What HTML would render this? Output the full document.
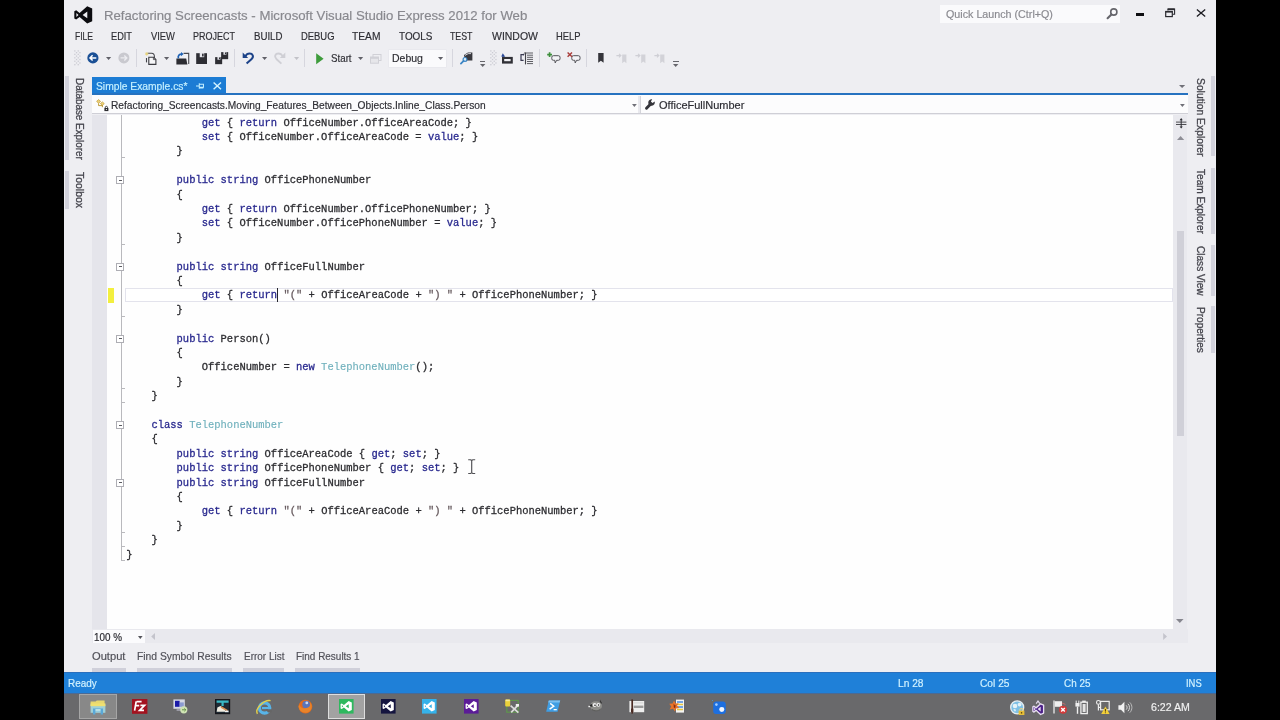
<!DOCTYPE html>
<html><head><meta charset="utf-8"><title>VS</title>
<style>
html,body{margin:0;padding:0;background:#000;}
body{width:1280px;height:720px;overflow:hidden;position:relative;font-family:"Liberation Sans",sans-serif;}
#w{position:absolute;left:64px;top:0;width:1152px;height:720px;background:#eeeef2;overflow:hidden;}
.t{position:absolute;white-space:pre;transform-origin:0 0;-webkit-text-stroke:0.18px currentColor;font-family:"Liberation Sans",sans-serif;}
.b{position:absolute;}
.c{position:absolute;white-space:pre;font-family:"Liberation Mono",monospace;font-size:10.475px;line-height:14.4px;color:#2c2c30;left:0;-webkit-text-stroke:0.28px currentColor;}
.k{color:#28288e}.y{color:#6fb0bc;-webkit-text-stroke:0.12px currentColor}.s{color:#685c60}
.v{position:absolute;writing-mode:vertical-rl;white-space:pre;-webkit-text-stroke:0.3px currentColor;font-family:"Liberation Sans",sans-serif;color:#4a4a50;}
svg{position:absolute;overflow:visible}
</style></head><body>
<div id="clip" style="position:absolute;left:64px;top:0;width:1152px;height:720px;overflow:hidden">
<div id="w" style="left:-64px;width:1280px;background:none;overflow:visible;filter:blur(0.6px)">
<div class="b" style="left:34px;top:-30px;width:1212px;height:780px;background:#eeeef2"></div>
<svg style="left:74.2px;top:6.3px" width="19" height="18" viewBox="0 0 19 18"><path d="M13.2 0.3 L18.2 2.6 L18.2 15.2 L13.2 17.6 L5.6 10.9 L2.2 13.6 L0.3 12.6 L0.3 5.2 L2.2 4.2 L5.6 6.9 Z M13.3 5.6 L8.6 8.9 L13.3 12.3 Z M2.4 6.9 L2.4 11 L4.5 8.9 Z" fill="#0c0c10" fill-rule="evenodd"/></svg>
<div class="t" style="left:103.90px;top:6.16px;font-size:13.4px;line-height:19px;transform:scaleX(0.9851);color:#88888e;">Refactoring Screencasts - Microsoft Visual Studio Express 2012 for Web</div>
<div class="b" style="left:940px;top:4.6px;width:180px;height:18.4px;background:#fafafc"></div>
<div class="t" style="left:945.50px;top:6.93px;font-size:10.6px;line-height:15px;transform:scaleX(1.0119);color:#8a8a90;">Quick Launch (Ctrl+Q)</div>
<svg style="left:1105px;top:7px" width="14" height="14" viewBox="0 0 14 14"><circle cx="8.8" cy="5" r="3.1" fill="none" stroke="#66666c" stroke-width="1.6"/><path d="M6.4 7.4 L2.6 11.2" stroke="#66666c" stroke-width="2.1" stroke-linecap="round"/></svg>
<div class="b" style="left:1135.6px;top:12.8px;width:8.6px;height:3.3px;background:#0e0e12"></div>
<svg style="left:1164.8px;top:7.8px" width="10.4" height="9.4" viewBox="0 0 10.4 9.4"><path d="M2.9 2.6 V1 H9.6 V6.2 H7.6" fill="none" stroke="#2a2a30" stroke-width="1.1"/><path d="M2.9 1.3 H9.6" stroke="#2a2a30" stroke-width="1.7"/><rect x="0.7" y="3.5" width="6.6" height="5.1" fill="none" stroke="#2a2a30" stroke-width="1.2"/><path d="M0.7 3.8 H7.3" stroke="#2a2a30" stroke-width="1.5"/></svg>
<svg style="left:1195.6px;top:8.8px" width="10" height="8" viewBox="0 0 10 8"><path d="M0.9 0.5 L9.2 7.4 M9.2 0.5 L0.9 7.4" stroke="#1e1e24" stroke-width="1.35"/></svg>
<div class="t" style="left:74.50px;top:29.22px;font-size:10.9px;line-height:15px;transform:scaleX(0.7863);color:#2e2e34;">FILE</div>
<div class="t" style="left:111.00px;top:29.22px;font-size:10.9px;line-height:15px;transform:scaleX(0.8458);color:#2e2e34;">EDIT</div>
<div class="t" style="left:150.50px;top:29.22px;font-size:10.9px;line-height:15px;transform:scaleX(0.8615);color:#2e2e34;">VIEW</div>
<div class="t" style="left:193.00px;top:29.22px;font-size:10.9px;line-height:15px;transform:scaleX(0.8256);color:#2e2e34;">PROJECT</div>
<div class="t" style="left:254.00px;top:29.22px;font-size:10.9px;line-height:15px;transform:scaleX(0.8877);color:#2e2e34;">BUILD</div>
<div class="t" style="left:300.50px;top:29.22px;font-size:10.9px;line-height:15px;transform:scaleX(0.8642);color:#2e2e34;">DEBUG</div>
<div class="t" style="left:352.00px;top:29.22px;font-size:10.9px;line-height:15px;transform:scaleX(0.9413);color:#2e2e34;">TEAM</div>
<div class="t" style="left:398.50px;top:29.22px;font-size:10.9px;line-height:15px;transform:scaleX(0.9116);color:#2e2e34;">TOOLS</div>
<div class="t" style="left:450.00px;top:29.22px;font-size:10.9px;line-height:15px;transform:scaleX(0.8077);color:#2e2e34;">TEST</div>
<div class="t" style="left:491.50px;top:29.22px;font-size:10.9px;line-height:15px;transform:scaleX(0.9618);color:#2e2e34;">WINDOW</div>
<div class="t" style="left:555.50px;top:29.22px;font-size:10.9px;line-height:15px;transform:scaleX(0.8604);color:#2e2e34;">HELP</div>
<svg style="left:73.8px;top:49.6px" width="6.6" height="16.4" viewBox="0 0 6.6 16.4"><rect x="0.2" y="0.30" width="1.3" height="1.3" fill="#cbcbd3"/><rect x="3.6" y="0.30" width="1.3" height="1.3" fill="#cbcbd3"/><rect x="1.9" y="2.02" width="1.3" height="1.3" fill="#cbcbd3"/><rect x="5.3" y="2.02" width="1.3" height="1.3" fill="#cbcbd3"/><rect x="0.2" y="3.74" width="1.3" height="1.3" fill="#cbcbd3"/><rect x="3.6" y="3.74" width="1.3" height="1.3" fill="#cbcbd3"/><rect x="1.9" y="5.46" width="1.3" height="1.3" fill="#cbcbd3"/><rect x="5.3" y="5.46" width="1.3" height="1.3" fill="#cbcbd3"/><rect x="0.2" y="7.18" width="1.3" height="1.3" fill="#cbcbd3"/><rect x="3.6" y="7.18" width="1.3" height="1.3" fill="#cbcbd3"/><rect x="1.9" y="8.90" width="1.3" height="1.3" fill="#cbcbd3"/><rect x="5.3" y="8.90" width="1.3" height="1.3" fill="#cbcbd3"/><rect x="0.2" y="10.62" width="1.3" height="1.3" fill="#cbcbd3"/><rect x="3.6" y="10.62" width="1.3" height="1.3" fill="#cbcbd3"/><rect x="1.9" y="12.34" width="1.3" height="1.3" fill="#cbcbd3"/><rect x="5.3" y="12.34" width="1.3" height="1.3" fill="#cbcbd3"/><rect x="0.2" y="14.06" width="1.3" height="1.3" fill="#cbcbd3"/><rect x="3.6" y="14.06" width="1.3" height="1.3" fill="#cbcbd3"/></svg>
<svg style="left:87px;top:52.4px" width="12" height="12" viewBox="0 0 12 12"><circle cx="5.9" cy="5.9" r="5.6" fill="#1b5096"/><path d="M9.3 5.9 H3.4 M5.6 3.3 L3 5.9 L5.6 8.5" stroke="#fff" stroke-width="1.5" fill="none"/></svg>
<svg style="left:105.5px;top:57.4px" width="5.2" height="3" viewBox="0 0 5.2 3"><path d="M0 0 H5.2 L2.6 2.9 Z" fill="#606068"/></svg>
<svg style="left:117.6px;top:52.4px" width="12" height="12" viewBox="0 0 12 12"><circle cx="5.9" cy="5.9" r="5.5" fill="#c9c9cf"/><path d="M2.6 5.9 H8.4 M6.3 3.4 L8.8 5.9 L6.3 8.4" stroke="#ececf0" stroke-width="1.4" fill="none"/></svg>
<div class="b" style="left:135.8px;top:48.5px;width:1.2px;height:18.5px;background:#d6d6de"></div>
<svg style="left:145.2px;top:52px" width="12" height="13" viewBox="0 0 12 13"><path d="M2.4 1.2 H6.6 C8.6 1.2 9.4 2.6 9.4 4.6 V6" fill="#f2f2f5" stroke="#44444a" stroke-width="1.05"/><path d="M1.5 6 V10.4" stroke="#44444a" stroke-width="1.1"/><path d="M3.8 5.2 H8.6 L10.9 7.4 V12.4 H3.8 Z" fill="#f6f6f8" stroke="#3a3a40" stroke-width="1.1"/><path d="M8.4 5.4 V7.6 H10.8" fill="none" stroke="#3a3a40" stroke-width="0.8"/><path d="M1.7 0.2 V3.6 M0 1.9 H3.4 M0.5 0.7 L2.9 3.1 M2.9 0.7 L0.5 3.1" stroke="#e6d27a" stroke-width="0.9"/></svg>
<svg style="left:164px;top:57.4px" width="5.2" height="3" viewBox="0 0 5.2 3"><path d="M0 0 H5.2 L2.6 2.9 Z" fill="#606068"/></svg>
<svg style="left:175.6px;top:52px" width="13.5" height="13" viewBox="0 0 13.5 13"><path d="M8 1.4 H12.6 V11.6 H8 Z" fill="#f2f2f5"/><path d="M7.6 1.4 H12.7 V12" fill="none" stroke="#4a4a50" stroke-width="1.1"/><path d="M0.4 12.6 V6.6 H10.2 L11.4 12.6 Z" fill="#2c2c32"/><path d="M2.4 6.4 C1.6 3.4 3.4 1.9 6.2 2.1" fill="none" stroke="#1f62b4" stroke-width="1.7"/><path d="M5 0 L7.6 2.1 L5 4.3 Z" fill="#1f62b4"/></svg>
<svg style="left:196.2px;top:52.8px" width="11.2" height="11.2" viewBox="0 0 12 12"><path d="M0.2 0.2 H11.8 V11.8 H0.2 Z" fill="#2e2e34"/><rect x="4" y="0" width="4.8" height="4.5" fill="#e6e6ec"/><rect x="6.5" y="0.7" width="1.7" height="3" fill="#2e2e34"/></svg>
<svg style="left:220.8px;top:51.8px" width="7.3" height="7.3" viewBox="0 0 12 12"><path d="M0.2 0.2 H11.8 V11.8 H0.2 Z" fill="#2e2e34"/><rect x="4" y="0" width="4.8" height="4.5" fill="#e6e6ec"/><rect x="6.5" y="0.7" width="1.7" height="3" fill="#2e2e34"/></svg>
<svg style="left:215px;top:57.4px" width="7.3" height="7.3" viewBox="0 0 12 12"><path d="M0.2 0.2 H11.8 V11.8 H0.2 Z" fill="#2e2e34"/><rect x="4" y="0" width="4.8" height="4.5" fill="#e6e6ec"/><rect x="6.5" y="0.7" width="1.7" height="3" fill="#2e2e34"/></svg>
<div class="b" style="left:234.3px;top:48.5px;width:1.2px;height:18.5px;background:#d6d6de"></div>
<svg style="left:242.3px;top:51.8px" width="12" height="12.5" viewBox="0 0 12 12.5"><path d="M4.6 11.6 L9.4 7.2 C12.4 4.4 10.6 1.5 7.6 1.5 C5.8 1.5 4.2 2.6 3.2 4.4" fill="none" stroke="#1d4389" stroke-width="2"/><path d="M0.7 0.6 V5.9 H6.2 Z" fill="#1d4389"/></svg>
<svg style="left:262.1px;top:57.4px" width="5.2" height="3" viewBox="0 0 5.2 3"><path d="M0 0 H5.2 L2.6 2.9 Z" fill="#606068"/></svg>
<svg style="left:274.4px;top:51.8px" width="12" height="12.5" viewBox="0 0 12 12.5"><path d="M7.4 11.6 L2.6 7.2 C-0.4 4.4 1.4 1.5 4.4 1.5 C6.2 1.5 7.8 2.6 8.8 4.4" fill="none" stroke="#cfcfd5" stroke-width="1.9"/><path d="M11.3 0.6 V5.9 H5.8 Z" fill="#cfcfd5"/></svg>
<svg style="left:293.8px;top:57.3px" width="5.2" height="3" viewBox="0 0 5.2 3"><path d="M0 0 H5.2 L2.6 2.9 Z" fill="#c2c2c8"/></svg>
<div class="b" style="left:303.7px;top:48.5px;width:1.2px;height:18.5px;background:#d6d6de"></div>
<svg style="left:315.8px;top:52.8px" width="8" height="11.4" viewBox="0 0 8 11.4"><path d="M0.2 0.2 L7.6 5.7 L0.2 11.2 Z" fill="#3e9c3c"/></svg>
<div class="t" style="left:330.80px;top:50.82px;font-size:10.9px;line-height:15px;transform:scaleX(0.8949);color:#2e2e34;">Start</div>
<svg style="left:357.6px;top:57.4px" width="5.2" height="3" viewBox="0 0 5.2 3"><path d="M0 0 H5.2 L2.6 2.9 Z" fill="#606068"/></svg>
<svg style="left:370px;top:53.6px" width="11.5" height="10" viewBox="0 0 11.5 10"><rect x="3" y="0.5" width="8" height="6" fill="none" stroke="#d0d0d6" stroke-width="1"/><rect x="0.5" y="3" width="8" height="6.2" fill="#e6e6ea" stroke="#d0d0d6" stroke-width="1"/><rect x="0.5" y="3" width="8" height="1.8" fill="#d0d0d6"/></svg>
<div class="b" style="left:388.8px;top:49.6px;width:57.1px;height:17.6px;background:#fafafc;box-shadow:0 0 0 0.6px #e6e6ec"></div>
<div class="t" style="left:391.80px;top:50.82px;font-size:10.9px;line-height:15px;transform:scaleX(0.9620);color:#2e2e34;">Debug</div>
<svg style="left:437.9px;top:57.4px" width="5.2" height="3" viewBox="0 0 5.2 3"><path d="M0 0 H5.2 L2.6 2.9 Z" fill="#606068"/></svg>
<div class="b" style="left:452.0px;top:48.5px;width:1.2px;height:18.5px;background:#d6d6de"></div>
<svg style="left:460.4px;top:52px" width="13" height="12.5" viewBox="0 0 13 12.5"><path d="M4 3 L8 0.5 H12.4 V8.6 H5" fill="#38383e"/><path d="M5 3.4 L8.2 1.6 H11" fill="none" stroke="#d4d4da" stroke-width="1"/><circle cx="5" cy="7.4" r="1.9" fill="#d8ecf8" stroke="#3a84c4" stroke-width="1.2"/><path d="M3.6 8.8 L0.9 11.6" stroke="#3a84c4" stroke-width="1.7" stroke-linecap="round"/></svg>
<div class="b" style="left:480px;top:60.6px;width:5.4px;height:1.1px;background:#66666c"></div><svg style="left:480px;top:63.5px" width="5.4" height="3" viewBox="0 0 5.4 3"><path d="M0 0 H5.4 L2.7 2.9 Z" fill="#66666c"/></svg>
<svg style="left:489.6px;top:49.6px" width="6.6" height="16.4" viewBox="0 0 6.6 16.4"><rect x="0.2" y="0.30" width="1.3" height="1.3" fill="#cbcbd3"/><rect x="3.6" y="0.30" width="1.3" height="1.3" fill="#cbcbd3"/><rect x="1.9" y="2.02" width="1.3" height="1.3" fill="#cbcbd3"/><rect x="5.3" y="2.02" width="1.3" height="1.3" fill="#cbcbd3"/><rect x="0.2" y="3.74" width="1.3" height="1.3" fill="#cbcbd3"/><rect x="3.6" y="3.74" width="1.3" height="1.3" fill="#cbcbd3"/><rect x="1.9" y="5.46" width="1.3" height="1.3" fill="#cbcbd3"/><rect x="5.3" y="5.46" width="1.3" height="1.3" fill="#cbcbd3"/><rect x="0.2" y="7.18" width="1.3" height="1.3" fill="#cbcbd3"/><rect x="3.6" y="7.18" width="1.3" height="1.3" fill="#cbcbd3"/><rect x="1.9" y="8.90" width="1.3" height="1.3" fill="#cbcbd3"/><rect x="5.3" y="8.90" width="1.3" height="1.3" fill="#cbcbd3"/><rect x="0.2" y="10.62" width="1.3" height="1.3" fill="#cbcbd3"/><rect x="3.6" y="10.62" width="1.3" height="1.3" fill="#cbcbd3"/><rect x="1.9" y="12.34" width="1.3" height="1.3" fill="#cbcbd3"/><rect x="5.3" y="12.34" width="1.3" height="1.3" fill="#cbcbd3"/><rect x="0.2" y="14.06" width="1.3" height="1.3" fill="#cbcbd3"/><rect x="3.6" y="14.06" width="1.3" height="1.3" fill="#cbcbd3"/></svg>
<svg style="left:501.2px;top:53.2px" width="12.5" height="11" viewBox="0 0 12.5 11"><path d="M0.2 3.6 L1.8 0.2 L4.2 3.8 Z" fill="#2a4a9a"/><path d="M2 3 V5" stroke="#2a4a9a" stroke-width="1.4"/><path d="M1 3.9 H11.8 V10.6 H1 Z" fill="#303036"/><rect x="3.2" y="6" width="6.4" height="2.2" fill="#f0f0f4"/></svg>
<svg style="left:519.8px;top:52px" width="13.5" height="12.5" viewBox="0 0 13.5 12.5"><path d="M4 1 H13 M7 3.2 H13 M7 5.3 H13 M7 7.4 H13 M7 9.5 H13 M7 11.6 H13" stroke="#55555c" stroke-width="0.95"/><path d="M5.5 0.6 V12.4" stroke="#44444a" stroke-width="1.1"/><path d="M3.6 2.6 H1 V8.4 H3.6" fill="none" stroke="#3a3a52" stroke-width="1.2"/><path d="M3 1.4 L4.6 2.6 L3 3.8 Z" fill="#3a3a52"/></svg>
<div class="b" style="left:538.8px;top:48.5px;width:1.2px;height:18.5px;background:#d6d6de"></div>
<svg style="left:546.8px;top:52.2px" width="14" height="12" viewBox="0 0 14 12"><path d="M6.4 3.7 H11.4 Q13 3.7 13 5.2 V6.8 Q13 8.3 11.4 8.3 H9.6 L8.2 10.9 L7.8 8.3 H6.4 Q4.8 8.3 4.8 6.8 V5.2 Q4.8 3.7 6.4 3.7 Z" fill="#f4f4f7" stroke="#4a4a50" stroke-width="0.95"/><path d="M2.6 0.3 V5 M0.2 2.65 H5" stroke="#3e8e3c" stroke-width="1.7"/></svg>
<svg style="left:566.8px;top:52.2px" width="14" height="12" viewBox="0 0 14 12"><path d="M6.4 3.7 H11.4 Q13 3.7 13 5.2 V6.8 Q13 8.3 11.4 8.3 H9.6 L8.2 10.9 L7.8 8.3 H6.4 Q4.8 8.3 4.8 6.8 V5.2 Q4.8 3.7 6.4 3.7 Z" fill="#f4f4f7" stroke="#4a4a50" stroke-width="0.95"/><path d="M0.6 0.4 L5 4.8 M5 0.4 L0.6 4.8" stroke="#a83c3a" stroke-width="1.4"/></svg>
<div class="b" style="left:586.1px;top:48.5px;width:1.2px;height:18.5px;background:#d6d6de"></div>
<svg style="left:597.6px;top:53px" width="6" height="10" viewBox="0 0 6 10"><path d="M0.2 0 H5.6 V9.8 L2.9 7.8 L0.2 9.8 Z" fill="#34343a"/></svg>
<svg style="left:615.6px;top:52.8px" width="11" height="10.5" viewBox="0 0 11 10.5"><path d="M6.2 1.6 H10.4 V10.2 L8.3 8.6 L6.2 10.2 Z" fill="#d2d2d8"/><path d="M0.4 2.6 H4.8 M3 0.8 L4.9 2.6 L3 4.4" fill="none" stroke="#cfcfd5" stroke-width="1.1"/></svg>
<svg style="left:634.8px;top:52.8px" width="11" height="10.5" viewBox="0 0 11 10.5"><path d="M6.2 1.6 H10.4 V10.2 L8.3 8.6 L6.2 10.2 Z" fill="#d2d2d8"/><path d="M0.4 2.6 H4.8 M3 0.8 L4.9 2.6 L3 4.4" fill="none" stroke="#cfcfd5" stroke-width="1.1"/></svg>
<svg style="left:654.4px;top:52.8px" width="11" height="10.5" viewBox="0 0 11 10.5"><path d="M6.2 1.6 H10.4 V10.2 L8.3 8.6 L6.2 10.2 Z" fill="#d2d2d8"/><path d="M0.4 2.6 H4.8 M3 0.8 L4.9 2.6 L3 4.4" fill="none" stroke="#cfcfd5" stroke-width="1.1"/></svg>
<div class="b" style="left:673.2px;top:60.6px;width:5.4px;height:1.1px;background:#66666c"></div><svg style="left:673.2px;top:63.5px" width="5.4" height="3" viewBox="0 0 5.4 3"><path d="M0 0 H5.4 L2.7 2.9 Z" fill="#66666c"/></svg>
<div class="b" style="left:64.5px;top:76.3px;width:4.8px;height:83.3px;background:#d2d2dc"></div>
<div class="v" style="left:71.80px;top:77.50px;font-size:10.0px;line-height:14px;transform-origin:0 0;transform:scaleY(0.9889);color:#45454d">Database Explorer</div>
<div class="b" style="left:64.5px;top:171.2px;width:4.8px;height:37.4px;background:#d2d2dc"></div>
<div class="v" style="left:71.80px;top:172.40px;font-size:10.0px;line-height:14px;transform-origin:0 0;transform:scaleY(1.0444);color:#45454d">Toolbox</div>
<div class="b" style="left:1210.6px;top:76.3px;width:4.9px;height:79.9px;background:#d2d2dc"></div>
<div class="v" style="left:1192.60px;top:77.50px;font-size:10.0px;line-height:14px;transform-origin:0 0;transform:scaleY(1.0308);color:#45454d">Solution Explorer</div>
<div class="b" style="left:1210.6px;top:167.5px;width:4.9px;height:66.3px;background:#d2d2dc"></div>
<div class="v" style="left:1192.60px;top:168.70px;font-size:10.0px;line-height:14px;transform-origin:0 0;transform:scaleY(1.0067);color:#45454d">Team Explorer</div>
<div class="b" style="left:1210.6px;top:245px;width:4.9px;height:51.0px;background:#d2d2dc"></div>
<div class="v" style="left:1192.60px;top:246.20px;font-size:10.0px;line-height:14px;transform-origin:0 0;transform:scaleY(1.0065);color:#45454d">Class View</div>
<div class="b" style="left:1210.6px;top:306px;width:4.9px;height:47.3px;background:#d2d2dc"></div>
<div class="v" style="left:1192.60px;top:307.20px;font-size:10.0px;line-height:14px;transform-origin:0 0;transform:scaleY(1.0071);color:#45454d">Properties</div>
<div class="b" style="left:92px;top:76.5px;width:133.8px;height:18px;background:#1c7cd4"></div>
<div class="b" style="left:92px;top:93.3px;width:1095.5px;height:2.2px;background:#2672c0"></div>
<div class="t" style="left:95.70px;top:78.82px;font-size:10.9px;line-height:15px;transform:scaleX(0.9440);color:#c4f0ff;">Simple Example.cs*</div>
<svg style="left:196.4px;top:83px" width="8.2" height="6.2" viewBox="0 0 9 6.4"><path d="M0 3.2 H3.4 M3.6 0.2 V6.2 M3.6 1.2 H8.2 V4.6 H3.6 M3.6 5.2 H8.2" fill="none" stroke="#c4f0ff" stroke-width="1.1"/></svg>
<svg style="left:212.6px;top:82.2px" width="9" height="8" viewBox="0 0 9 8"><path d="M0.6 0.5 L8 7.3 M8 0.5 L0.6 7.3" stroke="#d4f4ff" stroke-width="1.4"/></svg>
<svg style="left:1178.8px;top:85.3px" width="6.2" height="3" viewBox="0 0 6.2 3"><path d="M0 0 H6.2 L3.1 2.9 Z" fill="#707078"/></svg>
<div class="b" style="left:92px;top:95.4px;width:1095.5px;height:18.2px;background:#fcfcfd"></div>
<div class="b" style="left:92px;top:113.4px;width:1095.5px;height:1.1px;background:#cfcfd6"></div>
<div class="b" style="left:637.8px;top:96px;width:2.8px;height:17.4px;background:#e9e9ee"></div>
<div class="b" style="left:639.7px;top:96px;width:0.9px;height:17.4px;background:#d4d4da"></div>
<svg style="left:95.5px;top:98.6px" width="13.5" height="12.5" viewBox="0 0 13.5 12.5"><path d="M0.6 2.4 L2.6 0.6 L4.6 2.4 L2.6 4.2 Z M4.4 4.6 L6.4 2.9 L8.3 4.6 L6.4 6.3 Z" fill="#ecd27a" stroke="#c09a34" stroke-width="0.7"/><path d="M2.6 4.4 V6.6 H6.6 M6.4 6.4 V8.2" fill="none" stroke="#b58e22" stroke-width="0.9"/><rect x="8.4" y="9" width="4" height="3.1" fill="#2c2c30"/><path d="M9.3 9.2 V8.2 C9.3 7 11.5 7 11.5 8.2 V9.2" fill="none" stroke="#2c2c30" stroke-width="0.85"/><rect x="9.9" y="10" width="1" height="1" fill="#e8e8e8"/></svg>
<div class="t" style="left:111.20px;top:97.62px;font-size:10.9px;line-height:15px;transform:scaleX(0.9364);color:#2e2e34;">Refactoring_Screencasts.Moving_Features_Between_Objects.Inline_Class.Person</div>
<svg style="left:631.6px;top:103.9px" width="4.8" height="3" viewBox="0 0 4.8 3"><path d="M0 0 H4.8 L2.4 2.9 Z" fill="#707078"/></svg>
<svg style="left:645.4px;top:98.6px" width="10" height="10.5" viewBox="0 0 10 10.5"><path d="M1.5 9.2 L5.4 5.2" stroke="#34343a" stroke-width="2.9" stroke-linecap="round"/><path d="M9.7 2.6 A3.3 3.3 0 1 1 7.2 0.3 L5.9 2.5 L7.5 4.1 L9.7 2.6 Z" fill="#34343a"/></svg>
<div class="t" style="left:659.20px;top:97.62px;font-size:10.9px;line-height:15px;transform:scaleX(1.0094);color:#2e2e34;">OfficeFullNumber</div>
<svg style="left:1180.4px;top:103.9px" width="4.8" height="3" viewBox="0 0 4.8 3"><path d="M0 0 H4.8 L2.4 2.9 Z" fill="#707078"/></svg>
<div class="b" style="left:92px;top:114.5px;width:15px;height:514.1px;background:#e5e5eb"></div>
<div class="b" style="left:106.9px;top:114.5px;width:1066.3px;height:514.1px;background:#fefefe"></div>
<div class="b" style="left:124.5px;top:288.20px;width:1046.4px;height:11.90px;border:1.6px solid #e3e3ec;border-left-width:1.3px;background:#fff"></div>
<div class="b" style="left:108.3px;top:288.10px;width:5.6px;height:14.7px;background:#f3ef3e"></div>
<div class="b" style="left:120.6px;top:114.5px;width:1.1px;height:446.50px;background:#b9b9bd"></div>
<div class="b" style="left:121px;top:157.20px;width:3.8px;height:1px;background:#b9b9bd"></div>
<div class="b" style="left:121px;top:243.60px;width:3.8px;height:1px;background:#b9b9bd"></div>
<div class="b" style="left:121px;top:315.60px;width:3.8px;height:1px;background:#b9b9bd"></div>
<div class="b" style="left:121px;top:387.60px;width:3.8px;height:1px;background:#b9b9bd"></div>
<div class="b" style="left:121px;top:402.00px;width:3.8px;height:1px;background:#b9b9bd"></div>
<div class="b" style="left:121px;top:531.60px;width:3.8px;height:1px;background:#b9b9bd"></div>
<div class="b" style="left:121px;top:546.00px;width:3.8px;height:1px;background:#b9b9bd"></div>
<div class="b" style="left:121px;top:560.40px;width:3.8px;height:1px;background:#b9b9bd"></div>
<div class="b" style="left:116.4px;top:176.40px;width:5.9px;height:5.9px;border:1px solid #aeaeb4;background:#fff"></div>
<div class="b" style="left:118.5px;top:179.80px;width:3.8px;height:1.1px;background:#5a5a60"></div>
<div class="b" style="left:116.4px;top:262.80px;width:5.9px;height:5.9px;border:1px solid #aeaeb4;background:#fff"></div>
<div class="b" style="left:118.5px;top:266.20px;width:3.8px;height:1.1px;background:#5a5a60"></div>
<div class="b" style="left:116.4px;top:334.80px;width:5.9px;height:5.9px;border:1px solid #aeaeb4;background:#fff"></div>
<div class="b" style="left:118.5px;top:338.20px;width:3.8px;height:1.1px;background:#5a5a60"></div>
<div class="b" style="left:116.4px;top:421.20px;width:5.9px;height:5.9px;border:1px solid #aeaeb4;background:#fff"></div>
<div class="b" style="left:118.5px;top:424.60px;width:3.8px;height:1.1px;background:#5a5a60"></div>
<div class="b" style="left:116.4px;top:478.80px;width:5.9px;height:5.9px;border:1px solid #aeaeb4;background:#fff"></div>
<div class="b" style="left:118.5px;top:482.20px;width:3.8px;height:1.1px;background:#5a5a60"></div>
<div class="c" style="left:201.73px;top:115.60px"><span class="k">get</span> { <span class="k">return</span> OfficeNumber.OfficeAreaCode; }</div>
<div class="c" style="left:201.73px;top:130.00px"><span class="k">set</span> { OfficeNumber.OfficeAreaCode = <span class="k">value</span>; }</div>
<div class="c" style="left:176.59px;top:144.40px">}</div>
<div class="c" style="left:176.59px;top:173.20px"><span class="k">public</span> <span class="k">string</span> OfficePhoneNumber</div>
<div class="c" style="left:176.59px;top:187.60px">{</div>
<div class="c" style="left:201.73px;top:202.00px"><span class="k">get</span> { <span class="k">return</span> OfficeNumber.OfficePhoneNumber; }</div>
<div class="c" style="left:201.73px;top:216.40px"><span class="k">set</span> { OfficeNumber.OfficePhoneNumber = <span class="k">value</span>; }</div>
<div class="c" style="left:176.59px;top:230.80px">}</div>
<div class="c" style="left:176.59px;top:259.60px"><span class="k">public</span> <span class="k">string</span> OfficeFullNumber</div>
<div class="c" style="left:176.59px;top:274.00px">{</div>
<div class="c" style="left:201.73px;top:288.40px"><span class="k">get</span> { <span class="k">return</span> <span class="s">"("</span> + OfficeAreaCode + <span class="s">") "</span> + OfficePhoneNumber; }</div>
<div class="c" style="left:176.59px;top:302.80px">}</div>
<div class="c" style="left:176.59px;top:331.60px"><span class="k">public</span> Person()</div>
<div class="c" style="left:176.59px;top:346.00px">{</div>
<div class="c" style="left:201.73px;top:360.40px">OfficeNumber = <span class="k">new</span> <span class="y">TelephoneNumber</span>();</div>
<div class="c" style="left:176.59px;top:374.80px">}</div>
<div class="c" style="left:151.44px;top:389.20px">}</div>
<div class="c" style="left:151.44px;top:418.00px"><span class="k">class</span> <span class="y">TelephoneNumber</span></div>
<div class="c" style="left:151.44px;top:432.40px">{</div>
<div class="c" style="left:176.59px;top:446.80px"><span class="k">public</span> <span class="k">string</span> OfficeAreaCode { <span class="k">get</span>; <span class="k">set</span>; }</div>
<div class="c" style="left:176.59px;top:461.20px"><span class="k">public</span> <span class="k">string</span> OfficePhoneNumber { <span class="k">get</span>; <span class="k">set</span>; }</div>
<div class="c" style="left:176.59px;top:475.60px"><span class="k">public</span> <span class="k">string</span> OfficeFullNumber</div>
<div class="c" style="left:176.59px;top:490.00px">{</div>
<div class="c" style="left:201.73px;top:504.40px"><span class="k">get</span> { <span class="k">return</span> <span class="s">"("</span> + OfficeAreaCode + <span class="s">") "</span> + OfficePhoneNumber; }</div>
<div class="c" style="left:176.59px;top:518.80px">}</div>
<div class="c" style="left:151.44px;top:533.20px">}</div>
<div class="c" style="left:126.30px;top:547.60px">}</div>
<div class="b" style="left:277.36px;top:288.10px;width:1px;height:13.6px;background:#26262c"></div>
<svg style="left:467.6px;top:458.8px" width="7.4" height="15.2" viewBox="0 0 7.4 15.2"><path d="M0.2 0.7 H2.6 L3.7 1.5 L4.8 0.7 H7.2 M3.7 1.4 V13.8 M0.2 14.5 H2.6 L3.7 13.7 L4.8 14.5 H7.2" fill="none" stroke="#505054" stroke-width="1.15"/></svg>
<div class="b" style="left:1173.2px;top:114.5px;width:14.3px;height:528.7px;background:#e9e9ee"></div>
<div class="b" style="left:92px;top:628.6px;width:1095.5px;height:14.6px;background:#e9e9ee"></div>
<div class="b" style="left:1176.8px;top:231.2px;width:7.6px;height:205px;background:#d0d0d8"></div>
<svg style="left:1175.6px;top:117.6px" width="10.4" height="10.6" viewBox="0 0 10.4 10.6"><path d="M0 4.1 H10.4 M0 6.5 H10.4" stroke="#3a3a40" stroke-width="0.9"/><path d="M5.2 0 L6.8 2.2 H3.6 Z M5.2 10.6 L6.8 8.4 H3.6 Z" fill="#2e2e34"/><path d="M5.2 1.6 V9" stroke="#2e2e34" stroke-width="1"/></svg>
<svg style="left:1177px;top:135.6px" width="7" height="4" viewBox="0 0 7 4"><path d="M0 3.9 L3.6 0 L7.2 3.9 Z" fill="#8e8e96"/></svg>
<svg style="left:1176.4px;top:619.2px" width="7.6" height="4.2" viewBox="0 0 7.6 4.2"><path d="M0 0.1 L3.8 4.1 L7.6 0.1 Z" fill="#86868e"/></svg>
<svg style="left:1163px;top:632.8px" width="4.2" height="7" viewBox="0 0 4.2 7"><path d="M0.2 0 L4 3.5 L0.2 7 Z" fill="#c4c4cc"/></svg>
<svg style="left:150.8px;top:633px" width="4.2" height="7" viewBox="0 0 4.2 7"><path d="M4 0 L0.2 3.5 L4 7 Z" fill="#c4c4cc"/></svg>
<div class="b" style="left:92.6px;top:630px;width:52.8px;height:13.4px;background:#fbfbfd"></div>
<div class="t" style="left:94.00px;top:630.13px;font-size:10.6px;line-height:15px;transform:scaleX(0.9316);color:#2a2a30;">100 %</div>
<svg style="left:138.3px;top:636.2px" width="4.6" height="3" viewBox="0 0 4.6 3"><path d="M0 0 H4.6 L2.3 2.9 Z" fill="#55555c"/></svg>
<div class="t" style="left:92.30px;top:648.82px;font-size:10.9px;line-height:15px;transform:scaleX(1.0238);color:#505058;">Output</div>
<div class="b" style="left:91.9px;top:667.6px;width:34.3px;height:5px;background:#d0d0da"></div>
<div class="t" style="left:137.30px;top:648.82px;font-size:10.9px;line-height:15px;transform:scaleX(0.9474);color:#505058;">Find Symbol Results</div>
<div class="b" style="left:136.9px;top:667.6px;width:95.5px;height:5px;background:#d0d0da"></div>
<div class="t" style="left:243.50px;top:648.82px;font-size:10.9px;line-height:15px;transform:scaleX(0.9160);color:#505058;">Error List</div>
<div class="b" style="left:243.1px;top:667.6px;width:41.3px;height:5px;background:#d0d0da"></div>
<div class="t" style="left:295.80px;top:648.82px;font-size:10.9px;line-height:15px;transform:scaleX(0.9143);color:#505058;">Find Results 1</div>
<div class="b" style="left:295.4px;top:667.6px;width:64.5px;height:5px;background:#d0d0da"></div>
<div class="b" style="left:64px;top:672.2px;width:1152px;height:21.3px;background:#1f80d8"></div>
<div class="b" style="left:64px;top:672.1px;width:1152px;height:1.1px;background:#2a6fbd"></div>
<div class="t" style="left:67.80px;top:675.62px;font-size:10.9px;line-height:15px;transform:scaleX(0.9109);color:#d2f2ff;">Ready</div>
<div class="t" style="left:897.50px;top:675.62px;font-size:10.9px;line-height:15px;transform:scaleX(0.9349);color:#d2f2ff;">Ln 28</div>
<div class="t" style="left:980.30px;top:675.62px;font-size:10.9px;line-height:15px;transform:scaleX(0.9363);color:#d2f2ff;">Col 25</div>
<div class="t" style="left:1063.60px;top:675.62px;font-size:10.9px;line-height:15px;transform:scaleX(0.9076);color:#d2f2ff;">Ch 25</div>
<div class="t" style="left:1186.00px;top:675.62px;font-size:10.9px;line-height:15px;transform:scaleX(0.8640);color:#d2f2ff;">INS</div>
<div class="b" style="left:64px;top:693.4px;width:1152px;height:26.6px;background:#69696b"></div>
<div class="b" style="left:64px;top:693.2px;width:1152px;height:1px;background:#4a6a94"></div>
<div class="b" style="left:79.4px;top:694.2px;width:35.8px;height:22.8px;background:#888888;border:1.1px solid #a6a6a6;box-sizing:content-box"></div>
<div class="b" style="left:327.8px;top:694px;width:35.4px;height:23px;background:#a2a2a2;border:1.5px solid #dedede"></div>
<svg style="left:90.4px;top:700.4px" width="16" height="15" viewBox="0 0 16 15"><path d="M0.6 1.6 H5.6 L6.8 0.4 H14.6 V6 H0.6 Z" fill="#e8d870"/><path d="M0.6 4.4 H15.4 V12.8 H0.6 Z" fill="#9fd0d8"/><path d="M0.6 3.4 H15.4 V6.2 H0.6 Z" fill="#f0e070"/><path d="M3 8.4 H13 V14.4 H10.6 V11.4 H5.4 V14.4 H3 Z" fill="#5aa8d8"/><rect x="5.4" y="9" width="5.2" height="2.4" fill="#b8e0e8"/></svg>
<svg style="left:131.8px;top:699.2px" width="15.4" height="14.8" viewBox="0 0 15.4 14.8"><rect width="15.4" height="14.8" fill="#a3121f"/><path d="M4.6 2.6 H9.6 M4.2 2.4 L2.6 11.6 M3.6 6.6 H7.2 M8.4 6.4 H12.6 L7.6 11.4 H12" fill="none" stroke="#fff" stroke-width="1.7"/></svg>
<svg style="left:173.2px;top:698.8px" width="15" height="15" viewBox="0 0 15 15"><rect x="0.4" y="0.4" width="11.4" height="9.4" fill="#d4d8e4"/><rect x="2" y="1.8" width="4.6" height="6" fill="#1a1aa8"/><rect x="6.8" y="3.4" width="4" height="4.4" fill="#8a9ad0"/><rect x="3.6" y="10" width="5" height="2" fill="#9a9aa4"/><circle cx="10.8" cy="10.8" r="3.6" fill="#cfe4b4"/><path d="M9 10.8 H12.6 M11.4 9.4 L12.8 10.8 L11.4 12.2" stroke="#5a8a3a" stroke-width="0.9" fill="none"/></svg>
<svg style="left:215px;top:698.8px" width="15.2" height="15.2" viewBox="0 0 15.2 15.2"><rect width="15.2" height="15.2" fill="#16161c"/><rect x="1.2" y="1.2" width="12.8" height="12.8" fill="#1e2a34"/><path d="M1.6 2.6 H13.6 M7.6 2.6 V7" stroke="#38b8c4" stroke-width="2.2"/><path d="M1.6 12.8 H10 V10 L5.4 7 L2.4 8.6 Z" fill="#f0ece0"/><path d="M6 8 L12.4 11.6" stroke="#d89050" stroke-width="1.6"/><path d="M10 12.4 H13.6" stroke="#f4f4f4" stroke-width="1.6"/></svg>
<svg style="left:255.6px;top:698.6px" width="16.4" height="16.4" viewBox="0 0 16.4 16.4"><circle cx="8.6" cy="9" r="5.2" fill="none" stroke="#58b4e8" stroke-width="3.2"/><rect x="6" y="8" width="8" height="2.1" fill="#58b4e8"/><path d="M9.6 10.2 H15.6 V13.4 H12" fill="#666"/><path d="M1.4 14.8 C-1.4 10.4 7.6 0.4 14.6 1.6" fill="none" stroke="#e4d04a" stroke-width="1.4"/></svg>
<svg style="left:297.6px;top:699px" width="14.8" height="14.8" viewBox="0 0 14.8 14.8"><circle cx="7.4" cy="7.6" r="6.9" fill="#e26a1c"/><circle cx="8.2" cy="5.6" r="3.9" fill="#5a74b8"/><path d="M1.2 5.4 C2.6 9.4 7 10.4 10.6 8.2 C12.6 7 12.4 4.6 11.6 3.4 C14.4 5 14.6 10 11.2 12.6 C7.4 15.4 1 13 0.6 7.6 Z" fill="#e8842a"/><circle cx="8.8" cy="3.9" r="1.4" fill="#c8d8f0"/></svg>
<svg style="left:339.1px;top:699.2px" width="14.6" height="14.6" viewBox="0 0 24 24"><rect width="24" height="24" fill="#2eb85e"/><path transform="translate(2.3,3.2) scale(1.03,0.98)" d="M13.2 0.3 L18.2 2.6 L18.2 15.2 L13.2 17.6 L5.6 10.9 L2.2 13.6 L0.3 12.6 L0.3 5.2 L2.2 4.2 L5.6 6.9 Z M13.3 5.6 L8.6 8.9 L13.3 12.3 Z M2.4 6.9 L2.4 11 L4.5 8.9 Z" fill="#fff" fill-rule="evenodd"/></svg>
<svg style="left:380.8px;top:699.2px" width="14.6" height="14.6" viewBox="0 0 24 24"><rect width="24" height="24" fill="#15153f"/><path transform="translate(2.3,3.2) scale(1.03,0.98)" d="M13.2 0.3 L18.2 2.6 L18.2 15.2 L13.2 17.6 L5.6 10.9 L2.2 13.6 L0.3 12.6 L0.3 5.2 L2.2 4.2 L5.6 6.9 Z M13.3 5.6 L8.6 8.9 L13.3 12.3 Z M2.4 6.9 L2.4 11 L4.5 8.9 Z" fill="#fff" fill-rule="evenodd"/></svg>
<svg style="left:421.8px;top:699.2px" width="14.6" height="14.6" viewBox="0 0 24 24"><rect width="24" height="24" fill="#35b2ea"/><path transform="translate(2.3,3.2) scale(1.03,0.98)" d="M13.2 0.3 L18.2 2.6 L18.2 15.2 L13.2 17.6 L5.6 10.9 L2.2 13.6 L0.3 12.6 L0.3 5.2 L2.2 4.2 L5.6 6.9 Z M13.3 5.6 L8.6 8.9 L13.3 12.3 Z M2.4 6.9 L2.4 11 L4.5 8.9 Z" fill="#fff" fill-rule="evenodd"/></svg>
<svg style="left:463.6px;top:699.2px" width="14.6" height="14.6" viewBox="0 0 24 24"><rect width="24" height="24" fill="#5b1b97"/><path transform="translate(2.3,3.2) scale(1.03,0.98)" d="M13.2 0.3 L18.2 2.6 L18.2 15.2 L13.2 17.6 L5.6 10.9 L2.2 13.6 L0.3 12.6 L0.3 5.2 L2.2 4.2 L5.6 6.9 Z M13.3 5.6 L8.6 8.9 L13.3 12.3 Z M2.4 6.9 L2.4 11 L4.5 8.9 Z" fill="#fff" fill-rule="evenodd"/></svg>
<svg style="left:504.8px;top:699.2px" width="14.6" height="14.6" viewBox="0 0 14.6 14.6"><rect x="1.8" y="1.4" width="11.4" height="11.8" fill="none" stroke="#5e9a4a" stroke-width="1.1"/><rect x="0.2" y="0.6" width="5" height="6.8" rx="1" fill="#ecd23a"/><rect x="0.6" y="0.6" width="4.2" height="1.6" fill="#f6ea9a"/><path d="M5.6 6.6 L13.4 13.6 M13 6.2 L6.2 13.4" stroke="#dcdcdc" stroke-width="1.7"/><rect x="10.8" y="5" width="3.2" height="2.6" fill="#f0f0f0"/></svg>
<svg style="left:546.2px;top:700px" width="14.4" height="12.2" viewBox="0 0 14.4 12.2"><path d="M2.8 0.4 H14.2 L11.6 11.8 H0.2 Z" fill="#3f9ee4"/><path d="M2.8 0.4 H14.2 L13.6 2.6 H2.2 Z" fill="#7cc0f0"/><path d="M4.2 3.4 L7.8 6.2 L3.6 9.2 M7.6 9.6 H10.8" fill="none" stroke="#fff" stroke-width="1.4"/></svg>
<svg style="left:587.6px;top:699.4px" width="15" height="13" viewBox="0 0 15 13"><path d="M12 0.4 L13.8 4 L12.4 6 Z" fill="#2a2a2a"/><ellipse cx="8" cy="7" rx="6" ry="4.8" fill="#8e8e8a"/><path d="M0.4 6.4 L4 5 L4.4 8 Z" fill="#2a2a2a"/><circle cx="6.6" cy="6" r="1.9" fill="#f2f2f2"/><circle cx="10.4" cy="5.8" r="1.9" fill="#f2f2f2"/><circle cx="7" cy="6.2" r="0.8" fill="#222"/><circle cx="10.6" cy="6" r="0.8" fill="#222"/><path d="M4 10.4 C6.4 12.4 10.4 12.2 12.6 10" stroke="#5a5a58" stroke-width="1" fill="none"/><circle cx="1.2" cy="7.4" r="0.9" fill="#f0f0f0"/></svg>
<svg style="left:628.8px;top:698.6px" width="15.6" height="15" viewBox="0 0 15.6 15"><rect x="0.4" y="2" width="14.8" height="11.2" fill="#eeeeee"/><rect x="4.6" y="6.6" width="9.8" height="2.4" fill="#9a9a9a"/><rect x="4.6" y="3.4" width="9.8" height="1" fill="#d2d2d2"/><path d="M3.2 0.4 V14.6" stroke="#4a2a22" stroke-width="1.7"/><path d="M2 9.6 H4.4 V13 H2 Z" fill="#4a2a22"/></svg>
<svg style="left:669.2px;top:699.4px" width="15.6" height="14.2" viewBox="0 0 15.6 14.2"><rect x="7" y="0.6" width="8" height="13" fill="#f4f4f4"/><path d="M8 3 H14 M8 8 H14" stroke="#4a8ae0" stroke-width="1.4"/><path d="M8 5.6 H14 M8 10.4 H14" stroke="#e8c83a" stroke-width="1.5"/><path d="M5 1.6 L6.6 4.6 L9.8 4.2 L8 6.8 L10.4 9 L7 9.4 L6 12.6 L4 9.8 L0.6 10.6 L2.2 7.4 L0.2 4.8 L3.6 4.6 Z" fill="#e8742a"/><path d="M4.6 4.6 L6 6.4 L7.4 6.6 L6.2 7.8 L6.4 9.2 L4.8 8.4 Z" fill="#8a2a10"/></svg>
<svg style="left:713.4px;top:701px" width="13.2" height="13.2" viewBox="0 0 13.2 13.2"><rect x="0.2" y="0.4" width="12.6" height="12.6" rx="3" fill="#1d6fe0"/><circle cx="3.4" cy="3.6" r="1.3" fill="#a8d0ff"/><circle cx="8.8" cy="8.6" r="2.5" fill="#f4f8ff"/></svg>
<div class="b" style="left:711.6px;top:699.6px;width:1.6px;height:1.6px;background:#4a90c8"></div>
<svg style="left:1009.6px;top:699.6px" width="16" height="16" viewBox="0 0 16 16"><circle cx="7.2" cy="7.4" r="6.5" fill="#7fc0e6" stroke="#e6eef2" stroke-width="1.3"/><circle cx="5" cy="6" r="2.3" fill="#e4f2f8"/><circle cx="9.6" cy="4.6" r="1.9" fill="#e4f2f8"/><path d="M3.4 9.4 C4.4 8.4 6 9 6 10.6 C5.6 12 4.2 11.6 3.4 9.4 Z" fill="#d4ecf6"/><rect x="8.6" y="10.6" width="5.8" height="4.4" fill="#e6bf3a"/><path d="M9.9 10.8 V9.6 C9.9 8.2 13.1 8.2 13.1 9.6 V10.8" fill="none" stroke="#ecd682" stroke-width="1.1"/><rect x="10.9" y="12" width="1.3" height="1.6" fill="#6a5210"/></svg>
<svg style="left:1032.4px;top:700px" width="12.4" height="15" viewBox="0 0 12.4 15"><path d="M4.2 3.6 L6 1 L7.8 3.6" fill="none" stroke="#e4dcee" stroke-width="1.2"/><path transform="translate(0.7,3.6) scale(0.6,0.62)" d="M13.2 0.3 L18.2 2.6 L18.2 15.2 L13.2 17.6 L5.6 10.9 L2.2 13.6 L0.3 12.6 L0.3 5.2 L2.2 4.2 L5.6 6.9 Z" fill="#4b2088" stroke="#e8def2" stroke-width="2.2" stroke-linejoin="round"/><path transform="translate(0.7,3.6) scale(0.6,0.62)" d="M13.3 5.2 L8.2 8.9 L13.3 12.7 Z M2.2 6.4 L2.2 11.4 L4.8 8.9 Z" fill="#e8def2"/></svg>
<svg style="left:1053.2px;top:700.4px" width="15" height="15" viewBox="0 0 15 15"><path d="M1 0.4 V13.6" stroke="#ececec" stroke-width="1.3"/><path d="M1.8 1.2 H9 V6.8 H1.8 Z" fill="#efefef"/><circle cx="10" cy="9.8" r="4" fill="#d23a3a"/><path d="M8.2 8 L11.8 11.6 M11.8 8 L8.2 11.6" stroke="#fff" stroke-width="1.4"/><path d="M9 3 L12.4 4.4" stroke="#c46a6a" stroke-width="1"/></svg>
<svg style="left:1075.2px;top:700.4px" width="14" height="14.6" viewBox="0 0 14 14.6"><path d="M1.2 0.6 V3 M3.8 0.6 V3" stroke="#efefef" stroke-width="1"/><rect x="0.4" y="3" width="4.2" height="3.6" fill="#efefef"/><path d="M2.5 6.6 V13.8" stroke="#efefef" stroke-width="1.4"/><rect x="7.2" y="0.6" width="3.6" height="1.6" fill="#efefef"/><rect x="5.9" y="2.2" width="6.4" height="11.4" fill="none" stroke="#efefef" stroke-width="1.3"/><rect x="7.6" y="4" width="3" height="8" fill="#e4e4e4"/></svg>
<svg style="left:1096.4px;top:700.4px" width="15" height="15" viewBox="0 0 15 15"><rect x="4.6" y="1.4" width="8.6" height="8.4" fill="none" stroke="#ececec" stroke-width="1.2"/><circle cx="2.4" cy="2.4" r="1.9" fill="none" stroke="#ececec" stroke-width="1.1"/><path d="M2.4 4.2 V10.4 M2.4 7.4 H5" stroke="#ececec" stroke-width="1.2"/><path d="M9.4 6.6 L13.6 14 H5.2 Z" fill="#f2cf3a"/><path d="M9.4 9 V11.6 M9.4 12.4 V13.2" stroke="#4a3a10" stroke-width="1"/></svg>
<svg style="left:1118.2px;top:700.8px" width="14.6" height="13" viewBox="0 0 14.6 13"><path d="M0.4 4.2 H3 L6.4 0.8 V12.2 L3 8.8 H0.4 Z" fill="#f2f2f2"/><path d="M8.2 4.4 C9.4 5.6 9.4 7.4 8.2 8.6" fill="none" stroke="#e4e4e4" stroke-width="1"/><path d="M10 2.8 C12 4.8 12 8.2 10 10.2" fill="none" stroke="#d8d8d8" stroke-width="1"/><path d="M11.8 1.4 C14.6 4.2 14.6 8.8 11.8 11.6" fill="none" stroke="#c4c4c4" stroke-width="0.9"/></svg>
<div class="t" style="left:1151.00px;top:700.02px;font-size:10.9px;line-height:15px;transform:scaleX(0.9752);color:#f0f0f0;">6:22 AM</div>
</div></div></body></html>
